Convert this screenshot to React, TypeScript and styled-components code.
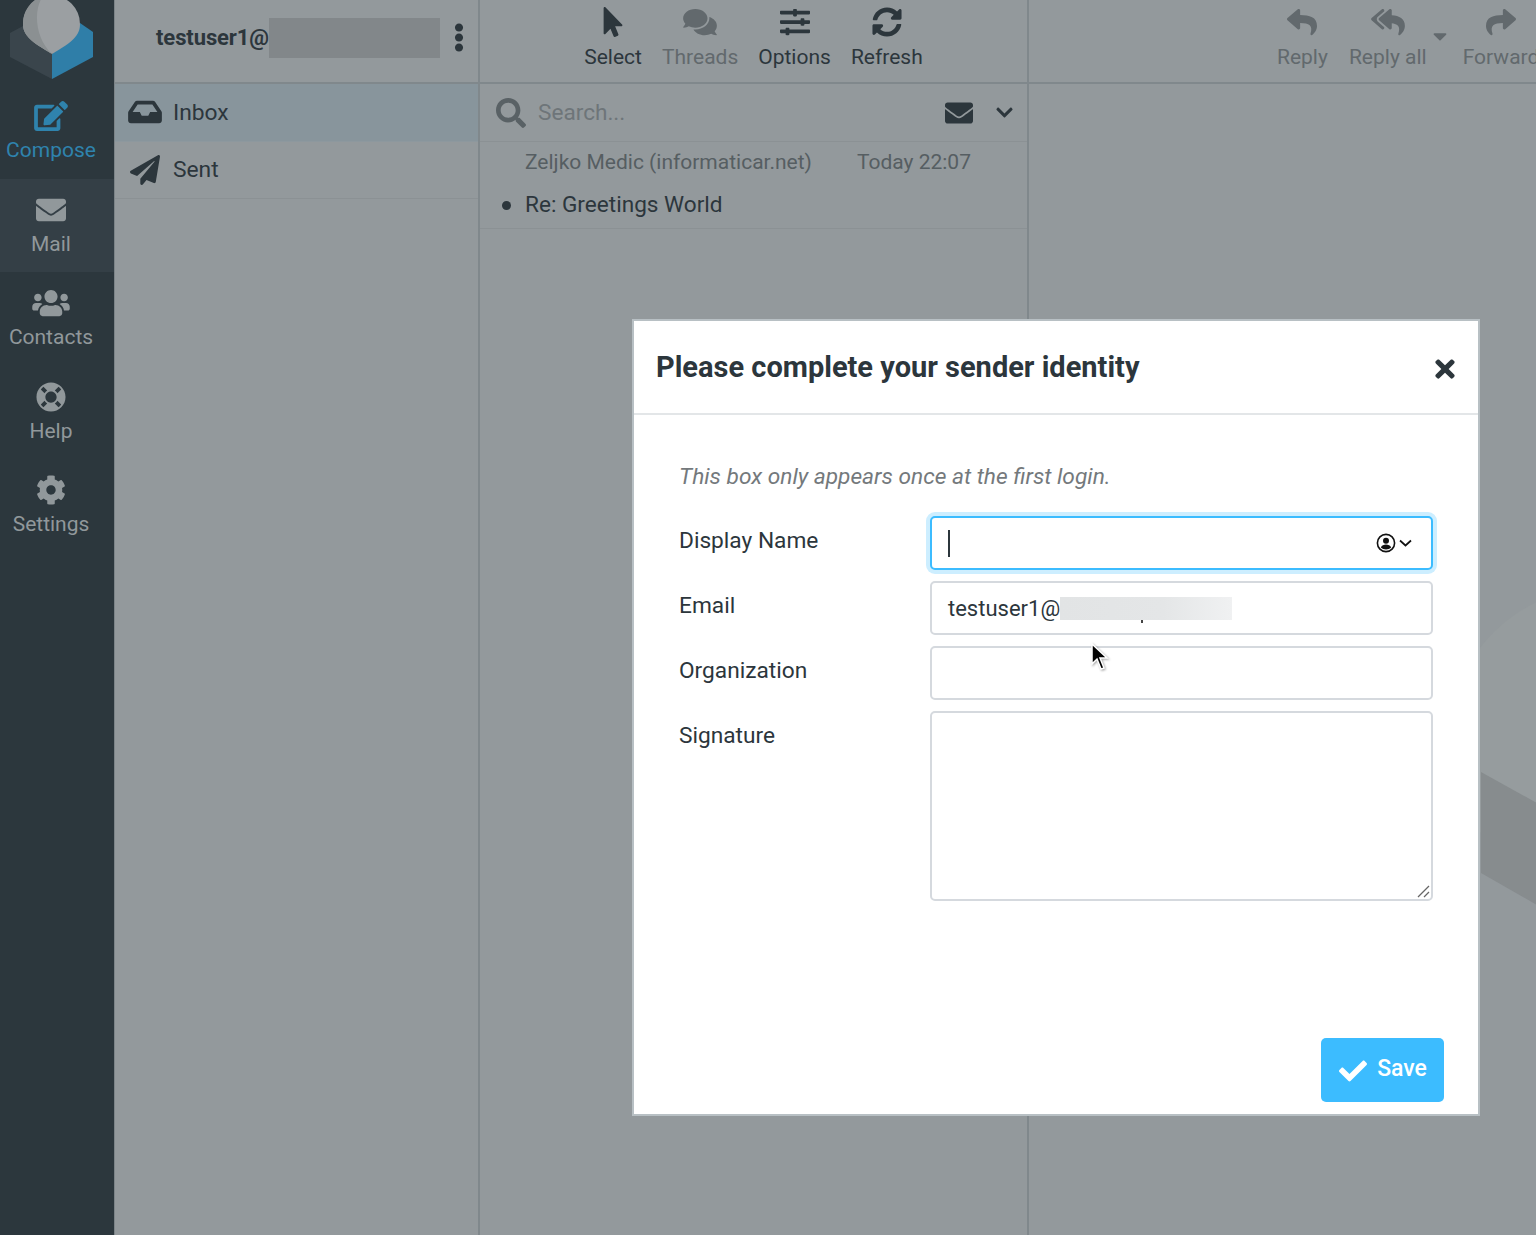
import React from "react";
import styled, { createGlobalStyle } from "styled-components";
import {
  FaCaretDown,
  FaCheck,
  FaChevronDown,
  FaCog,
  FaComments,
  FaEdit,
  FaEllipsisV,
  FaEnvelope,
  FaInbox,
  FaLifeRing,
  FaMousePointer,
  FaPaperPlane,
  FaReply,
  FaReplyAll,
  FaSearch,
  FaShare,
  FaSlidersH,
  FaSyncAlt,
  FaTimes,
  FaUsers,
} from "react-icons/fa";

const GlobalStyle = createGlobalStyle`
  html, body {
    margin: 0;
    padding: 0;
    height: 100%;
    overflow: hidden;
    font-family: Roboto, "Liberation Sans", sans-serif;
    background: #93999c;
  }
  * { box-sizing: border-box; }
`;

const Layout = styled.div`
  display: flex;
  width: 1536px;
  height: 1235px;
  position: relative;
  overflow: hidden;
  background: #93999c;
  color: #2c363c;
`;

const Sidebar = styled.nav`
  width: 115px;
  flex: none;
  background: #2c373d;
  border-right: 1px solid #7c8488;
  display: flex;
  flex-direction: column;
`;

const LogoBox = styled.div`
  height: 85px;
  flex: none;
  overflow: hidden;
`;

const NavItem = styled.div<{ $active?: boolean; $accent?: boolean }>`
  height: 93.5px;
  display: flex;
  flex-direction: column;
  align-items: center;
  justify-content: flex-start;
  padding: 16px 12px 0 0;
  gap: 6px;
  font-size: 21px;
  line-height: 26px;
  background: ${(p) => (p.$active ? "#343f46" : "transparent")};
  color: ${(p) => (p.$accent ? "#2f83ad" : "#91989b")};
  svg {
    width: 38px;
    height: 30px;
  }
`;

const FolderColumn = styled.section`
  width: 365px;
  flex: none;
  border-right: 2px solid #80888c;
  display: flex;
  flex-direction: column;
`;

const ListColumn = styled.section`
  width: 549px;
  flex: none;
  border-right: 2px solid #80888c;
  display: flex;
  flex-direction: column;
`;

const ContentColumn = styled.section`
  flex: 1;
  min-width: 0;
  position: relative;
  overflow: hidden;
`;

const Header = styled.header`
  height: 84px;
  flex: none;
  border-bottom: 2px solid #80888c;
  display: flex;
  align-items: flex-start;
  position: relative;
`;

const AccountHeader = styled(Header)`
  padding: 18px 7px 0 41px;
  justify-content: space-between;
`;

const AccountName = styled.div`
  display: flex;
  font-size: 22px;
  font-weight: 700;
  line-height: 40px;
  height: 40px;
  letter-spacing: -0.1px;
`;

const HiddenText = styled.span`
  display: block;
  width: 171px;
  height: 40px;
  background: #82878a;
`;

const MoreIcon = styled(FaEllipsisV)`
  width: 24px;
  height: 29px;
  margin-top: 5px;
`;

const FolderRow = styled.div<{ $active?: boolean }>`
  height: 57.5px;
  display: flex;
  align-items: center;
  padding-left: 13px;
  gap: 11px;
  font-size: 22.8px;
  background: ${(p) => (p.$active ? "#88959c" : "transparent")};
  border-bottom: 1px solid ${(p) => (p.$active ? "#8d989e" : "#8b9194")};
  svg {
    width: 34px;
    height: 30px;
  }
`;

const ToolbarMiddle = styled(Header)`
  justify-content: center;
  gap: 20px;
  padding-top: 7px;
`;

const ToolbarRight = styled(Header)`
  gap: 21px;
  padding: 7px 0 0 248px;
  white-space: nowrap;
`;

const ToolButton = styled.div<{ $muted?: boolean }>`
  display: flex;
  flex-direction: column;
  align-items: center;
  flex: none;
  font-size: 21px;
  line-height: 26px;
  gap: 7px;
  color: ${(p) => (p.$muted ? "#62696d" : "#2c363c")};
  svg {
    width: 34px;
    height: 30px;
  }
`;

const CaretBox = styled.div`
  margin: 18px -9px 0 -19px;
  width: 24px;
  color: #62696d;
  svg {
    width: 22px;
    height: 22px;
  }
`;

const SearchRow = styled.div`
  height: 58px;
  flex: none;
  display: flex;
  align-items: center;
  padding: 0 13px 0 16px;
  border-bottom: 1px solid #8b9194;
`;

const SearchIcon = styled(FaSearch)`
  width: 30px;
  height: 30px;
  color: #596165;
`;

const SearchText = styled.span`
  flex: 1;
  margin-left: 12px;
  font-size: 22.6px;
  color: #6e7579;
`;

const MailIcon = styled(FaEnvelope)`
  width: 30px;
  height: 28px;
`;

const ChevronIcon = styled(FaChevronDown)`
  width: 19px;
  height: 19px;
  margin-left: 21px;
`;

const MessageRow = styled.div`
  height: 87px;
  flex: none;
  border-bottom: 1px solid #8b9194;
  padding: 6px 0 0 45px;
  position: relative;
  font-size: 21px;
`;

const MessageMeta = styled.div`
  display: flex;
  gap: 45px;
  line-height: 28px;
  color: #565e62;
`;

const MessageSubject = styled.div`
  margin-top: 15px;
  line-height: 28px;
  font-size: 22.6px;
`;

const UnreadDot = styled.span`
  position: absolute;
  left: 22px;
  top: 59px;
  width: 9px;
  height: 9px;
  border-radius: 50%;
  background: #2c363c;
`;

const Watermark = styled.svg`
  position: absolute;
  left: 0;
  top: 0;
  width: 508px;
  height: 1235px;
`;

const Modal = styled.div`
  position: absolute;
  left: 632px;
  top: 319px;
  width: 848px;
  height: 797px;
  background: #fff;
  border: 2px solid #b8c0c4;
  display: flex;
  flex-direction: column;
`;

const ModalHeader = styled.div`
  height: 94px;
  flex: none;
  display: flex;
  align-items: center;
  justify-content: space-between;
  padding: 0 21px 0 22px;
  border-bottom: 2px solid #e3e6e8;
`;

const ModalTitle = styled.h2`
  margin: 0;
  font-size: 29px;
  font-weight: 700;
  color: #2c363c;
`;

const CloseIcon = styled(FaTimes)`
  width: 24px;
  height: 28px;
  margin-top: 4px;
  color: #2c363c;
`;

const ModalBody = styled.div`
  flex: 1;
  position: relative;
  padding: 48px 45px 0;
  color: #2c363c;
`;

const Hint = styled.p`
  margin: 0 0 25px;
  font-size: 22.7px;
  font-style: italic;
  line-height: 28px;
  color: #74797c;
`;

const FormGrid = styled.div`
  display: grid;
  grid-template-columns: 251px 503px;
  row-gap: 11px;
`;

const Label = styled.label`
  font-size: 22.7px;
  line-height: 28px;
  padding-top: 11px;
`;

const Field = styled.div<{ $focused?: boolean; $tall?: boolean }>`
  height: ${(p) => (p.$tall ? "190px" : "54px")};
  border-radius: 5px;
  position: relative;
  background: #fff;
  display: flex;
  align-items: center;
  padding: 0 16px;
  font-size: 22px;
  border: 2px solid ${(p) => (p.$focused ? "#3cbcff" : "#d5d9de")};
  box-shadow: ${(p) => (p.$focused ? "0 0 0 4px #cdeeff" : "none")};
`;

const Caret = styled.span`
  width: 2px;
  height: 27px;
  background: #2c363c;
`;

const IdentityButton = styled.span`
  position: absolute;
  right: 19px;
  top: 15px;
  display: flex;
  align-items: center;
  gap: 3px;
  color: #111;
`;

const BlurredDomain = styled.span`
  width: 172px;
  height: 23px;
  background: linear-gradient(90deg, #e2e4e5, #e4e6e7 60%, #f0f1f2);
  margin-top: 1px;
  position: relative;
  &::after {
    content: "";
    position: absolute;
    left: 81px;
    bottom: -3px;
    width: 2px;
    height: 3px;
    background: #444;
  }
`;

const GripIcon = styled.svg`
  position: absolute;
  right: 1px;
  bottom: 1px;
  width: 14px;
  height: 14px;
`;

const SaveButton = styled.button`
  position: absolute;
  right: 34px;
  bottom: 12px;
  width: 123px;
  height: 64px;
  border: 0;
  border-radius: 5px;
  background: #3cbcff;
  color: #fff;
  font: 500 23px Roboto, sans-serif;
  display: flex;
  align-items: center;
  justify-content: center;
  gap: 9px;
  padding: 0 0 4px;
  svg {
    width: 30px;
    height: 28px;
    margin-top: 5px;
  }
`;

const Pointer = styled.svg`
  position: absolute;
  left: 1088px;
  top: 641px;
  width: 24px;
  height: 32px;
  filter: drop-shadow(1px 1px 1px rgba(0, 0, 0, 0.35));
`;

const Logo = () => (
  <svg width="115" height="85" viewBox="0 0 115 85">
    <polygon points="10,33 23,26 52,54 52,79 10,57" fill="#3a454c" />
    <polygon points="80,23 93,32 93,57 52,79 52,54" fill="#2f7ea8" />
    <path d="M23 24A28.500 28.500 0 0 1 80 24C80 36 72 42 52 54C32 42 23 36 23 24Z" fill="#9b9fa2" />
    <path d="M43 -4C33 10 35 38 52 54C32 42 23 36 23 24A28.500 28.500 0 0 1 43 -4Z" fill="#8b9092" />
  </svg>
);

const IdentityIcon = () => (
  <svg width="20" height="20" viewBox="0 0 20 20">
    <circle cx="10" cy="10" r="8.6" fill="none" stroke="#111" strokeWidth="1.6" />
    <circle cx="10" cy="7.8" r="3" fill="#111" />
    <path d="M4.800 14.600c1-2.200 3-3 5.200-3s4.200.8 5.200 3c-1.300 1.300-3.200 2-5.200 2s-3.900-.7-5.200-2z" fill="#111" />
  </svg>
);

const SmallChevron = () => (
  <svg width="13" height="8" viewBox="0 0 13 8">
    <path d="M1 1.500l5.500 5 5.500-5" fill="none" stroke="#111" strokeWidth="1.700" />
  </svg>
);

const App = () => (
  <>
    <GlobalStyle />
    <Layout>
      <Sidebar>
        <LogoBox>
          <Logo />
        </LogoBox>
        <NavItem $accent>
          <FaEdit />
          Compose
        </NavItem>
        <NavItem $active>
          <FaEnvelope />
          Mail
        </NavItem>
        <NavItem>
          <FaUsers />
          Contacts
        </NavItem>
        <NavItem>
          <FaLifeRing />
          Help
        </NavItem>
        <NavItem>
          <FaCog />
          Settings
        </NavItem>
      </Sidebar>

      <FolderColumn>
        <AccountHeader>
          <AccountName>
            testuser1@
            <HiddenText />
          </AccountName>
          <MoreIcon />
        </AccountHeader>
        <FolderRow $active>
          <FaInbox />
          Inbox
        </FolderRow>
        <FolderRow>
          <FaPaperPlane />
          Sent
        </FolderRow>
      </FolderColumn>

      <ListColumn>
        <ToolbarMiddle>
          <ToolButton>
            <FaMousePointer />
            Select
          </ToolButton>
          <ToolButton $muted>
            <FaComments />
            Threads
          </ToolButton>
          <ToolButton>
            <FaSlidersH />
            Options
          </ToolButton>
          <ToolButton>
            <FaSyncAlt />
            Refresh
          </ToolButton>
        </ToolbarMiddle>
        <SearchRow>
          <SearchIcon />
          <SearchText>Search...</SearchText>
          <MailIcon />
          <ChevronIcon />
        </SearchRow>
        <MessageRow>
          <MessageMeta>
            <span>Zeljko Medic (informaticar.net)</span>
            <span>Today 22:07</span>
          </MessageMeta>
          <MessageSubject>Re: Greetings World</MessageSubject>
          <UnreadDot />
        </MessageRow>
      </ListColumn>

      <ContentColumn>
        <Watermark viewBox="0 0 508 1235">
          <circle cx="572" cy="740" r="152" fill="#969c9e" />
          <polygon points="452,772 508,803 508,905 452,873" fill="#878c8e" />
        </Watermark>
        <ToolbarRight>
          <ToolButton $muted>
            <FaReply />
            Reply
          </ToolButton>
          <ToolButton $muted>
            <FaReplyAll />
            Reply all
          </ToolButton>
          <CaretBox>
            <FaCaretDown />
          </CaretBox>
          <ToolButton $muted>
            <FaShare />
            Forward
          </ToolButton>
        </ToolbarRight>
      </ContentColumn>

      <Modal>
        <ModalHeader>
          <ModalTitle>Please complete your sender identity</ModalTitle>
          <CloseIcon />
        </ModalHeader>
        <ModalBody>
          <Hint>This box only appears once at the first login.</Hint>
          <FormGrid>
            <Label>Display Name</Label>
            <Field $focused>
              <Caret />
              <IdentityButton>
                <IdentityIcon />
                <SmallChevron />
              </IdentityButton>
            </Field>
            <Label>Email</Label>
            <Field>
              testuser1@
              <BlurredDomain />
            </Field>
            <Label>Organization</Label>
            <Field />
            <Label>Signature</Label>
            <Field $tall>
              <GripIcon viewBox="0 0 14 14">
                <path d="M2 13 13 2M8 13l5-5" stroke="#666" strokeWidth="1.300" />
              </GripIcon>
            </Field>
          </FormGrid>
          <SaveButton>
            <FaCheck />
            Save
          </SaveButton>
        </ModalBody>
      </Modal>

      <Pointer viewBox="0 0 24 32">
        <path d="M4 3v20l5-5 4 10 3-1-4-10h7z" fill="#000" stroke="#fff" strokeWidth="1.500" />
      </Pointer>
    </Layout>
  </>
);

export default App;
